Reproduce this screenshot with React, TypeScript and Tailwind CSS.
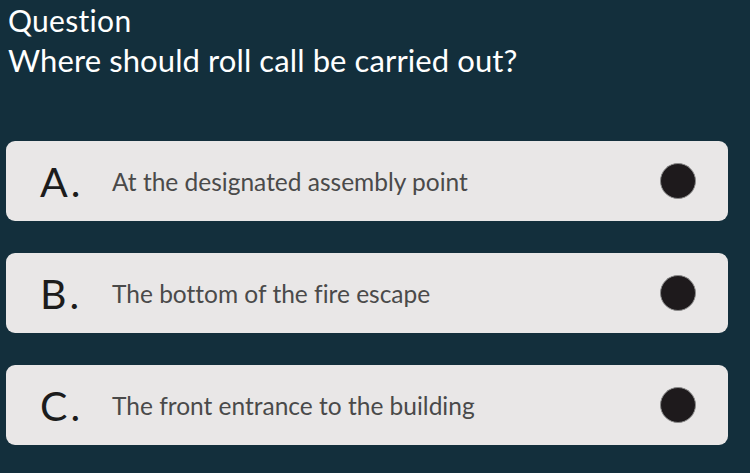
import React from "react";

const options = [
  { letter: "A.", text: "At the designated assembly point" },
  { letter: "B.", text: "The bottom of the fire escape" },
  { letter: "C.", text: "The front entrance to the building" },
];

export default function App() {
  return (
    <div
      className="w-[750px] h-[473px] overflow-hidden bg-[#132f3c] text-white [font-variant-ligatures:none]"
      style={{ fontFamily: "Lato, 'Open Sans', sans-serif" }}
    >
      <div className="pl-[8px] pt-[3px]">
        <div className="text-[30px] leading-[34px] tracking-[0.3px]">Question</div>
        <div className="text-[31px] leading-[38px] mt-[4px] tracking-[0.1px]">
          Where should roll call be carried out?
        </div>
      </div>
      <div className="flex flex-col gap-[32px] mt-[62px] pl-[6px] pr-[22px]">
        {options.map((o) => (
          <div
            key={o.letter}
            className="h-[80px] rounded-[9px] bg-[#e9e7e7] flex items-center pl-[34px] pr-[32px]"
          >
            <span className="w-[72px] text-[41px] leading-none text-[#1c1c1c] tracking-[3px]">{o.letter}</span>
            <span className="flex-1 text-[24.5px] text-[#4a4a4a] pt-[2px]">{o.text}</span>
            <span className="w-[36px] h-[36px] rounded-full bg-[#1e1a1c] border border-[#8a8a8a]" />
          </div>
        ))}
      </div>
    </div>
  );
}
